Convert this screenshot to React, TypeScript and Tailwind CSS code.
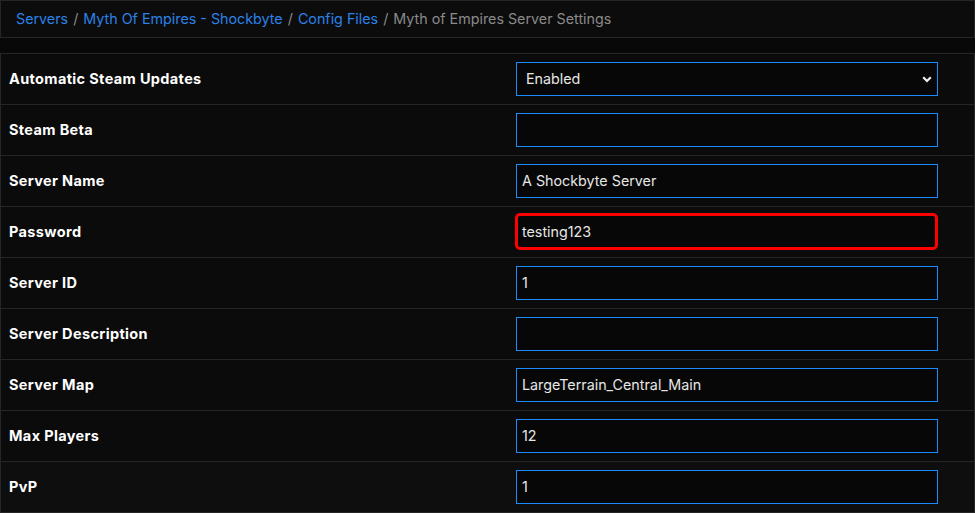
const rows: { label: string; value: string; select?: boolean; highlight?: boolean }[] = [
  { label: "Automatic Steam Updates", value: "Enabled", select: true },
  { label: "Steam Beta", value: "" },
  { label: "Server Name", value: "A Shockbyte Server" },
  { label: "Password", value: "testing123", highlight: true },
  { label: "Server ID", value: "1" },
  { label: "Server Description", value: "" },
  { label: "Server Map", value: "LargeTerrain_Central_Main" },
  { label: "Max Players", value: "12" },
  { label: "PvP", value: "1" },
];

export default function App() {
  return (
    <div
      className="h-[513px] w-[975px] overflow-hidden bg-[#080808] text-white"
      style={{ fontFamily: "Inter, 'Noto Sans', sans-serif" }}
    >
      {/* breadcrumb */}
      <div className="flex h-[38px] items-center border border-[#262626] bg-[#0c0c0c] px-[15px] text-[14.3px] text-[#8a8a8a]">
        <a className="text-[#2b82e8]">Servers</a>
        <span className="mx-[5px]">/</span>
        <a className="text-[#2b82e8]">Myth Of Empires - Shockbyte</a>
        <span className="mx-[5px]">/</span>
        <a className="text-[#2b82e8]">Config Files</a>
        <span className="mx-[5px]">/</span>
        <span>Myth of Empires Server Settings</span>
      </div>

      {/* settings table */}
      <div className="mt-[15px] divide-y divide-[#262626] border border-[#262626] bg-[#0b0b0b]">
        {rows.map((row, i) => (
          <div
            key={row.label}
            className={`box-content flex h-[50px] items-center ${i === rows.length - 1 ? "bg-[#0e0e0e]" : ""}`}
          >
            <div className="w-[515px] pl-[8px] text-[14.5px] font-bold tracking-[0.35px]">{row.label}</div>
            <div className="relative w-[422px]">
              {row.select ? (
                <div className="flex h-[34px] items-center justify-between border border-[#1a8cff] bg-[#070707] pl-[9px] pr-[5px] text-[14.3px] text-[#e6e6e6]">
                  <span>{row.value}</span>
                  <svg width="10" height="7" viewBox="0 0 10 7" fill="none">
                    <path d="M1.2 1.2 L5 5 L8.8 1.2" stroke="#f0f0f0" strokeWidth="2.2" />
                  </svg>
                </div>
              ) : (
                <div
                  className={`flex h-[34px] items-center border bg-[#070707] pl-[5px] text-[14.3px] text-[#e6e6e6] ${
                    row.highlight ? "border-[#070707]" : "border-[#1a8cff]"
                  }`}
                >
                  {row.value}
                </div>
              )}
              {row.highlight && (
                <div className="pointer-events-none absolute -top-[2px] -bottom-[1px] -left-[1px] right-0 rounded-[5px] border-[3px] border-[#ff0000]" />
              )}
            </div>
          </div>
        ))}
      </div>
    </div>
  );
}
